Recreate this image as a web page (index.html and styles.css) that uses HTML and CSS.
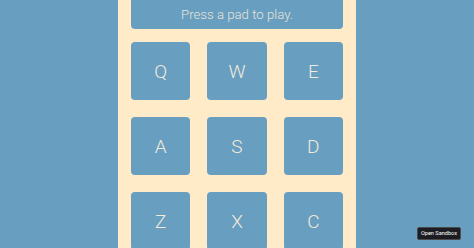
FILE: index.html
```html
<!DOCTYPE html>
<html>
<head>
<meta charset="utf-8">
<link rel="stylesheet" href="styles.css">
</head>
<body>
<div class="page">
  <div class="panel">
    <div class="display">Press a pad to play.</div>
    <div class="pads">
      <div class="pad">Q</div>
      <div class="pad">W</div>
      <div class="pad">E</div>
      <div class="pad">A</div>
      <div class="pad">S</div>
      <div class="pad">D</div>
      <div class="pad">Z</div>
      <div class="pad">X</div>
      <div class="pad">C</div>
    </div>
  </div>
</div>
<div class="sandbox">Open Sandbox</div>
</body>
</html>
```
FILE: styles.css
```css
html, body {
  margin: 0;
  padding: 0;
  height: 100%;
  overflow: hidden;
}
body {
  background: #689ec0;
  font-family: Roboto, "Liberation Sans", sans-serif;
  font-weight: 300;
}
.page {
  display: flex;
  justify-content: center;
  height: 100%;
}
.panel {
  width: 212px;
  padding: 0 13px;
  background: #ffebc7;
  display: flex;
  flex-direction: column;
  gap: 13px;
}
.display {
  flex: none;
  height: 29px;
  background: #689ec0;
  border-radius: 0 0 4px 4px;
  color: #e9e4d8;
  font-size: 13.2px;
  display: flex;
  align-items: center;
  justify-content: center;
  padding-bottom: 1px;
  box-sizing: border-box;
}
.pads {
  display: grid;
  grid-template-columns: repeat(3, 1fr);
  grid-auto-rows: 58px;
  column-gap: 17px;
  row-gap: 17px;
}
.pad {
  background: #689ec0;
  border-radius: 4px;
  color: #f3eada;
  font-size: 19px;
  display: flex;
  align-items: center;
  justify-content: center;
}
.sandbox {
  position: absolute;
  right: 13px;
  bottom: 8px;
  height: 11px;
  padding: 0 3px;
  background: #1b1d22;
  border: 1px solid #4a4a4a;
  border-radius: 2px;
  color: #fff;
  font-family: Roboto, "Liberation Sans", sans-serif;
  font-weight: 400;
  font-size: 5.6px;
  line-height: 11px;
}
```
